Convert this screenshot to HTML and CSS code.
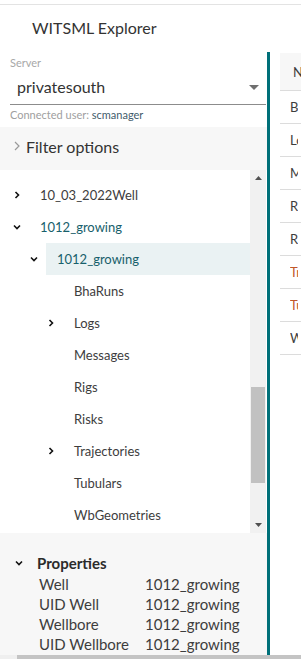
FILE: index.html
```html
<!DOCTYPE html>
<html lang="en">
<head>
  <meta charset="UTF-8">
  <meta name="viewport" content="width=device-width, initial-scale=1.0">
  <title>WITSML Explorer</title>
  <link rel="stylesheet" href="styles.css">
</head>
<body>
  <div class="top-line"></div>
  <header class="app-header">
    <span class="app-title">WITSML Explorer</span>
  </header>

  <div class="layout">
    <aside class="sidebar">
      <div class="server-block">
        <label class="field-label">Server</label>
        <div class="select">
          <span>privatesouth</span>
          <svg class="select-caret" width="10" height="5" viewBox="0 0 10 5"><path d="M0 0h10L5 5z" fill="#6f6f6f"/></svg>
        </div>
        <div class="connected">Connected user: <span class="user">scmanager</span></div>
      </div>

      <div class="filter-bar">
        <svg class="chev" width="6" height="10" viewBox="0 0 6 10"><path d="M1 1l4 4-4 4" fill="none" stroke="#9a9a9a" stroke-width="1.2"/></svg>
        <span>Filter options</span>
      </div>

      <div class="tree-wrap">
        <ul class="tree">
          <li class="node lvl0">
            <svg class="toggle" width="8" height="8" viewBox="0 0 8 8"><path d="M2.5 1l3 3-3 3" fill="none" stroke="#111" stroke-width="1.6"/></svg>
            <span>10_03_2022Well</span>
          </li>
          <li class="node lvl0 open">
            <svg class="toggle" width="8" height="8" viewBox="0 0 8 8"><path d="M1 2.5l3 3 3-3" fill="none" stroke="#111" stroke-width="1.6"/></svg>
            <span>1012_growing</span>
          </li>
          <li class="node lvl1 open selected">
            <svg class="toggle" width="8" height="8" viewBox="0 0 8 8"><path d="M1 2.5l3 3 3-3" fill="none" stroke="#111" stroke-width="1.6"/></svg>
            <span>1012_growing</span>
          </li>
          <li class="node lvl2"><span>BhaRuns</span></li>
          <li class="node lvl2">
            <svg class="toggle" width="8" height="8" viewBox="0 0 8 8"><path d="M2.5 1l3 3-3 3" fill="none" stroke="#111" stroke-width="1.6"/></svg>
            <span>Logs</span>
          </li>
          <li class="node lvl2"><span>Messages</span></li>
          <li class="node lvl2"><span>Rigs</span></li>
          <li class="node lvl2"><span>Risks</span></li>
          <li class="node lvl2">
            <svg class="toggle" width="8" height="8" viewBox="0 0 8 8"><path d="M2.5 1l3 3-3 3" fill="none" stroke="#111" stroke-width="1.6"/></svg>
            <span>Trajectories</span>
          </li>
          <li class="node lvl2"><span>Tubulars</span></li>
          <li class="node lvl2"><span>WbGeometries</span></li>
        </ul>
        <div class="scrollbar">
          <svg class="sb-arrow" width="7" height="4" viewBox="0 0 7 4"><path d="M0 4L3.5 0 7 4z" fill="#505050"/></svg>
          <div class="sb-track"><div class="sb-thumb"></div></div>
          <svg class="sb-arrow" width="7" height="4" viewBox="0 0 7 4"><path d="M0 0h7L3.5 4z" fill="#505050"/></svg>
        </div>
      </div>

      <div class="properties">
        <div class="props-head">
          <svg class="toggle" width="8" height="8" viewBox="0 0 8 8"><path d="M1 2.5l3 3 3-3" fill="none" stroke="#111" stroke-width="1.6"/></svg>
          <span>Properties</span>
        </div>
        <dl class="props">
          <dt>Well</dt><dd>1012_growing</dd>
          <dt>UID Well</dt><dd>1012_growing</dd>
          <dt>Wellbore</dt><dd>1012_growing</dd>
          <dt>UID Wellbore</dt><dd>1012_growing</dd>
        </dl>
      </div>
    </aside>

    <main class="content">
      <table class="grid">
        <thead>
          <tr><th>Name</th></tr>
        </thead>
        <tbody>
          <tr><td><span>BhaRuns</span></td></tr>
          <tr><td><span>Logs</span></td></tr>
          <tr><td><span>Messages</span></td></tr>
          <tr><td><span>Rigs</span></td></tr>
          <tr><td><span>Risks</span></td></tr>
          <tr class="warn"><td><span>Trajectories</span></td></tr>
          <tr class="warn"><td><span>Tubulars</span></td></tr>
          <tr><td><span>WbGeometries</span></td></tr>
        </tbody>
      </table>
    </main>
  </div>
  <div class="hscroll"><div class="hscroll-thumb"></div></div>
</body>
</html>
```

FILE: styles.css
```css
body {
  margin: 0;
  width: 301px;
  height: 659px;
  overflow: hidden;
  background-color: #fff;
  font-family: Lato, "Noto Sans", sans-serif;
  color: #3d3d3d;
}

.top-line {
  height: 4px;
  border-bottom: 1px solid #e3e3e3;
}

.app-header {
  height: 47px;
  display: flex;
  align-items: center;
  padding-left: 32px;
}

.app-title {
  font-size: 16px;
  color: #333;
  padding-bottom: 2px;
}

.layout {
  display: flex;
  height: 603px;
}

.sidebar {
  width: 267px;
  flex-shrink: 0;
  border-right: 3px solid #007079;
  display: flex;
  flex-direction: column;
}

/* server select */
.server-block {
  padding: 5px 1px 0 10px;
  height: 75px;
  box-sizing: border-box;
}

.field-label {
  display: block;
  font-size: 11px;
  color: #a8a8a8;
  line-height: 12px;
}

.select {
  display: flex;
  align-items: center;
  justify-content: space-between;
  height: 35px;
  padding: 0 7px 0 7px;
  border-bottom: 1px solid #8c8c8c;
  font-size: 16px;
  color: #333;
}

.select-caret {
  margin-top: 2px;
}

.connected {
  font-size: 11px;
  color: #a0a0a0;
  margin-top: 3px;
}

.connected .user {
  color: #3f5b6b;
}

/* filter */
.filter-bar {
  display: flex;
  align-items: center;
  gap: 6px;
  height: 38px;
  padding: 0 0 5px 14px;
  background-color: #f7f7f7;
  font-size: 16px;
  color: #333;
}

/* tree */
.tree-wrap {
  display: flex;
  height: 363px;
  background-color: #fff;
}

.tree {
  list-style: none;
  margin: 0;
  padding: 9px 0 0 0;
  flex: 1;
  overflow: hidden;
}

.node {
  position: relative;
  height: 32px;
  display: flex;
  align-items: center;
  font-size: 13px;
  color: #3d3d3d;
}

.node .toggle {
  position: absolute;
  top: 12px;
}

.lvl0 { padding-left: 40px; }
.lvl0 .toggle { left: 13px; }

.lvl1 { margin-left: 46px; padding-left: 11px; }
.lvl1 .toggle { left: -16px; }

.lvl2 { padding-left: 74px; }
.lvl2 .toggle { left: 47px; }

.node.open span {
  color: #18606b;
}

.node.selected {
  background-color: #eaf2f3;
}

.scrollbar {
  width: 16px;
  margin-right: 1px;
  background-color: #f1f1f1;
  display: flex;
  flex-direction: column;
  align-items: center;
}

.sb-arrow {
  margin: 6px 0;
}

.sb-track {
  flex: 1;
  width: 100%;
  position: relative;
}

.sb-thumb {
  position: absolute;
  left: 1px;
  right: 1px;
  top: 201px;
  height: 96px;
  background-color: #c1c1c1;
}

/* properties */
.properties {
  flex: 1;
  background-color: #f7f7f7;
  padding: 21px 0 0 15px;
}

.props-head {
  display: flex;
  align-items: center;
  gap: 14px;
  font-size: 15px;
  font-weight: bold;
  color: #2b2b2b;
  height: 18px;
}

.props {
  display: grid;
  grid-template-columns: 106px auto;
  margin: 2px 0 0 24px;
  font-size: 15px;
  line-height: 20px;
  color: #3d3d3d;
}

.props dt,
.props dd {
  margin: 0;
}

.hscroll {
  height: 4px;
  background-color: #efefef;
}

.hscroll-thumb {
  margin-left: 17px;
  height: 100%;
  background-color: #c4c4c4;
}

/* right grid */
.content {
  flex: 1;
  padding: 1px 0 0 10px;
  overflow: hidden;
}

.grid {
  border-collapse: collapse;
  width: 100px;
  font-size: 13px;
  color: #3d3d3d;
}

.grid th {
  background-color: #f7f7f7;
  font-weight: normal;
  text-align: left;
  height: 37px;
  padding: 0 0 0 13px;
  border-bottom: 1px solid #dcdcdc;
}

.grid td {
  height: 32px;
  padding: 0 0 0 10px;
  border-bottom: 1px solid #dcdcdc;
  white-space: nowrap;
}

.grid td span {
  display: block;
  width: 8px;
  overflow: hidden;
}

.grid tr.warn td {
  color: #c0582a;
}
```
